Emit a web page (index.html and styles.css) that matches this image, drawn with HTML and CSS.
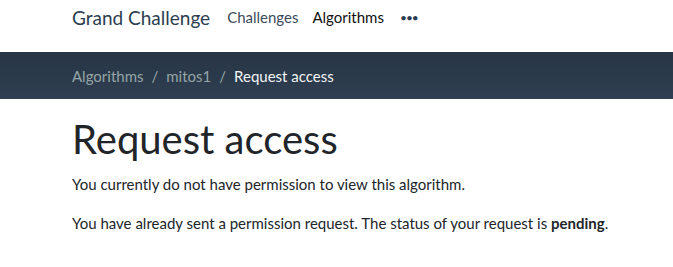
FILE: index.html
```html
<!DOCTYPE html>
<html>
<head>
<meta charset="utf-8">
<link rel="stylesheet" href="styles.css">
</head>
<body>
<nav class="navbar">
  <div class="container nav-inner">
    <a class="brand" href="#">Grand Challenge</a>
    <a class="nav-link" href="#">Challenges</a>
    <a class="nav-link active" href="#">Algorithms</a>
    <a class="nav-link dots" href="#">&bull;&bull;&bull;</a>
  </div>
</nav>
<div class="crumbbar">
  <div class="container crumbs">
    <a class="crumb" href="#">Algorithms</a>
    <span class="sep">/</span>
    <a class="crumb" href="#">mitos1</a>
    <span class="sep">/</span>
    <span class="crumb current">Request access</span>
  </div>
</div>
<main class="container main">
  <h1 class="title">Request access</h1>
  <p class="text">You currently do not have permission to view this algorithm.</p>
  <p class="text">You have already sent a permission request. The status of your request is <b>pending</b>.</p>
</main>
</body>
</html>
```

FILE: styles.css
```css
* { box-sizing: border-box; }
body {
  margin: 0;
  font-family: Lato, "Open Sans", sans-serif;
  font-size: 15px;
  color: #212529;
  background: #fff;
}
a { text-decoration: none; }
.container {
  padding-left: 72px;
  padding-right: 24px;
}
.navbar {
  height: 52px;
  display: flex;
  align-items: center;
}
.nav-inner {
  display: flex;
  align-items: center;
  width: 100%;
  padding-bottom: 18px;
}
.brand {
  font-size: 19px;
  color: #2c3e50;
  margin-right: 10px;
}
.nav-link {
  font-size: 15px;
  color: #3b4a5a;
  padding: 0 7px;
}
.nav-link.active { color: #111; }
.dots { font-size: 12px; letter-spacing: -1px; color: #2c3e50; padding-left: 9px; }
.crumbbar {
  height: 47px;
  background: linear-gradient(#273545, #2f3f51);
  display: flex;
  align-items: center;
}
.crumbs {
  display: flex;
  align-items: center;
  gap: 8px;
  font-size: 15px;
}
.crumb { color: #95a5a6; }
.sep { color: #95a5a6; }
.crumb.current { color: #f2f4f5; }
.main { padding-top: 16px; }
.title {
  font-size: 40px;
  font-weight: 400;
  margin: 0 0 10px;
  line-height: 1.2;
  color: #212529;
}
.text { margin: 0 0 16px; line-height: 1.5; }
```
